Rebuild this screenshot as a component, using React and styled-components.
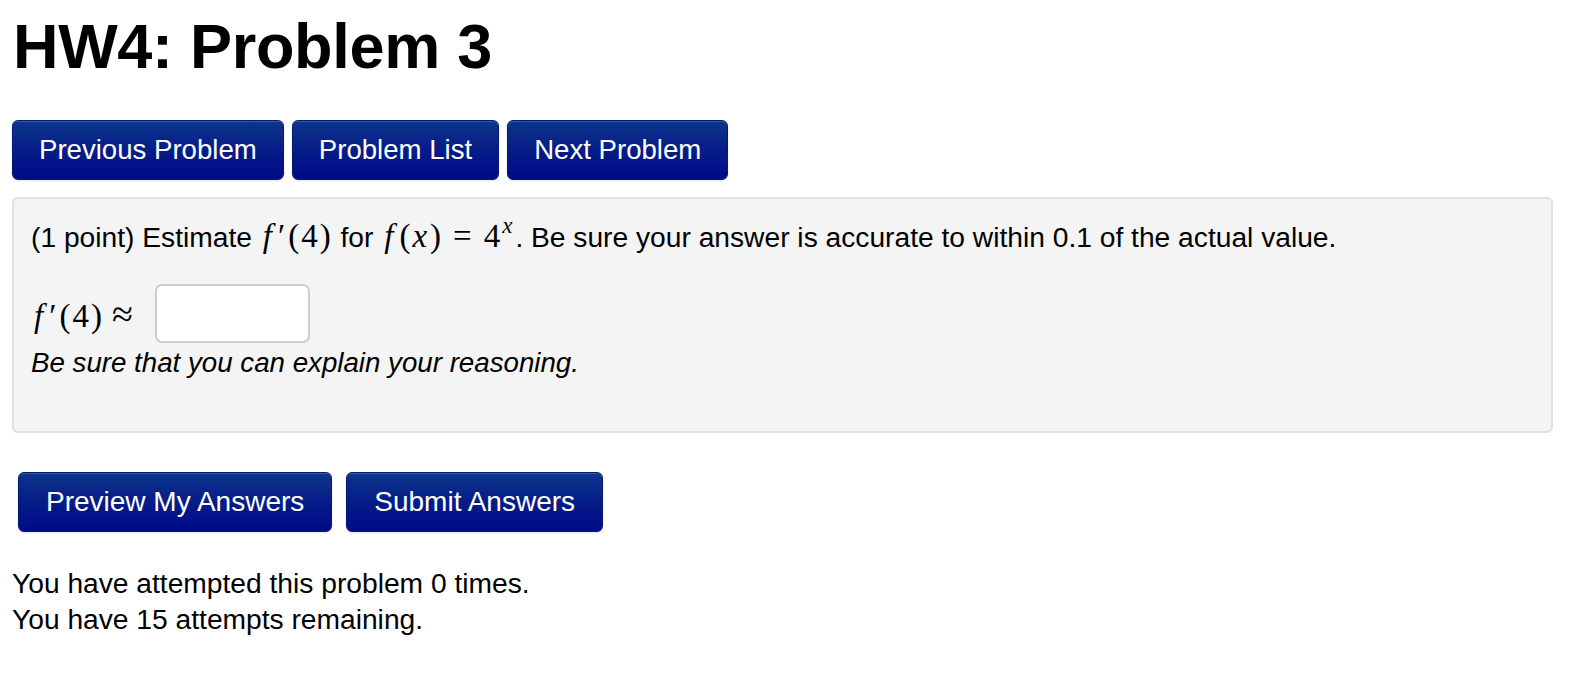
import React from "react";
import styled, { createGlobalStyle } from "styled-components";

const Global = createGlobalStyle`
  html, body { margin: 0; padding: 0; background: #fff; }
  body { font-family: "Liberation Sans", Arial, Helvetica, sans-serif; color: #000; }
`;

const Page = styled.div`
  padding: 0 31px 0 12px;
  font-size: 28.2px;
`;

const Title = styled.h1`
  margin: 10px 0 0 1px;
  font-size: 63px;
  line-height: 72px;
  font-weight: 700;
  letter-spacing: -0.3px;
`;

const NavBar = styled.div`
  display: flex;
  gap: 8px;
  margin-top: 38px;
`;

const Button = styled.button`
  height: 60px;
  padding: 0 ${(p) => p.$pad || 26}px;
  border: 1px solid #001a72;
  border-radius: 6px;
  background: linear-gradient(to bottom, #0c358b 0%, #061f88 45%, #000a87 100%);
  box-shadow: inset 0 1px 0 rgba(255, 255, 255, 0.18), 0 1px 2px rgba(0, 0, 0, 0.12);
  color: #fff;
  font-family: "Liberation Sans", Arial, Helvetica, sans-serif;
  font-size: ${(p) => p.$size || 27.6}px;
  line-height: 1;
  cursor: pointer;
`;

const Panel = styled.div`
  margin-top: 17px;
  background: #f4f4f4;
  border: 2px solid #e1e1e1;
  border-radius: 6px;
  padding: 17px 17px 51px;
`;

const Line = styled.div`
  line-height: 40px;
  white-space: nowrap;
`;

const MathText = styled.span`
  font-family: "Liberation Serif", "Times New Roman", serif;
  font-size: ${(p) => p.$size || 33}px;
  font-style: ${(p) => (p.$italic ? "italic" : "normal")};
  margin: 0 ${(p) => p.$mr || 0}px 0 ${(p) => p.$ml || 0}px;
`;

const Sup = styled.sup`
  font-family: "Liberation Serif", "Times New Roman", serif;
  font-style: italic;
  font-size: 23px;
  line-height: 0;
  vertical-align: 0.6em;
  margin-left: 2px;
  margin-right: 3px;
`;

const AnswerRow = styled.div`
  display: flex;
  align-items: center;
  gap: 20px;
  margin-top: 27px;
  padding-left: 0;
`;

const AnswerInput = styled.input`
  width: 155px;
  height: 59px;
  box-sizing: border-box;
  border: 2px solid #cdcdcd;
  border-radius: 7px;
  background: #fff;
  font-size: 24px;
  padding: 0 8px;
  outline: none;
`;

const Hint = styled.div`
  font-style: italic;
  font-size: 27.7px;
  line-height: 34px;
  margin-top: 3px;
`;

const ActionBar = styled.div`
  display: flex;
  gap: 14px;
  margin: 39px 0 0 6px;
`;

const Info = styled.div`
  margin-top: 33px;
  line-height: 36px;
`;

function FPrime4({ mr }) {
  return (
    <>
      <MathText $italic $ml={3} $mr={6}>f</MathText>
      <MathText $mr={3}>′</MathText>
      <MathText $mr={2}>(</MathText>
      <MathText>4</MathText>
      <MathText $ml={2} $mr={mr || 0}>)</MathText>
    </>
  );
}

export default function App() {
  return (
    <>
      <Global />
      <Page>
        <Title>HW4: Problem 3</Title>
        <NavBar>
          <Button>Previous Problem</Button>
          <Button>Problem List</Button>
          <Button>Next Problem</Button>
        </NavBar>
        <Panel>
          <Line>
            (1 point) Estimate <FPrime4 mr={2} /> for{" "}
            <MathText $italic $ml={3} $mr={6}>f</MathText>
            <MathText $mr={2}>(</MathText>
            <MathText $italic $mr={3}>x</MathText>
            <MathText $mr={12}>)</MathText>
            <MathText $mr={12}>=</MathText>
            <MathText>4</MathText>
            <Sup>x</Sup>. Be sure your answer is accurate to within 0.1 of the actual value.
          </Line>
          <AnswerRow>
            <span>
              <FPrime4 mr={10} />
              <MathText $size={38} $mr={2}>≈</MathText>
            </span>
            <AnswerInput type="text" aria-label="answer" />
          </AnswerRow>
          <Hint>Be sure that you can explain your reasoning.</Hint>
        </Panel>
        <ActionBar>
          <Button $size={28} $pad={27}>Preview My Answers</Button>
          <Button $size={28} $pad={27}>Submit Answers</Button>
        </ActionBar>
        <Info>
          <div>You have attempted this problem 0 times.</div>
          <div>You have 15 attempts remaining.</div>
        </Info>
      </Page>
    </>
  );
}
